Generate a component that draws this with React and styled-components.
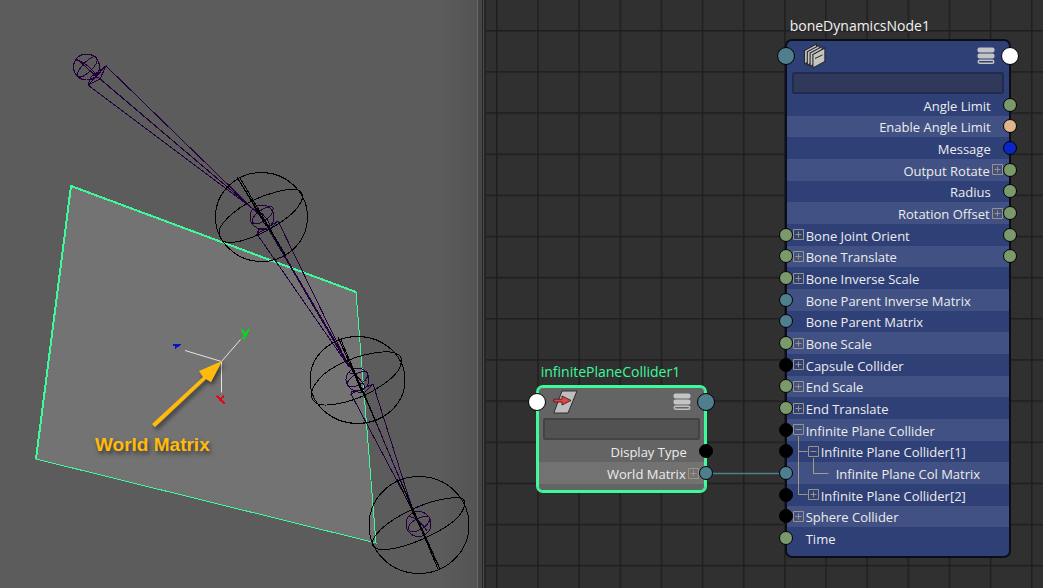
import React from 'react';
import styled, { createGlobalStyle } from 'styled-components';

const colors = {
	mint: '#3dfa9b',
	bone: '#24003f',
	amber: '#ffba0a',
	green: '#7b9a6b',
	teal: '#4f7e8e',
	black: '#000000',
	white: '#ffffff',
	blue: '#0a26c4',
	peach: '#dfb68c',
	tree: '#9a9484',
};

const GlobalStyle = createGlobalStyle`
	html, body, #root {
		height: 100%;
		margin: 0;
	}
	body {
		overflow: hidden;
		background: #303030;
		font-family: 'Open Sans', 'Noto Sans', sans-serif;
		font-size: 13px;
	}
	* {
		box-sizing: border-box;
	}
`;

const Workspace = styled.main`
	display: grid;
	grid-template-columns: 6fr 8px 7fr;
	height: 100%;
`;

const Viewport = styled.section`
	position: relative;
	overflow: hidden;
	border-right: 1px solid #6a6a6a;
	background: linear-gradient(90deg, #5c5c5c 92%, #535353 100%);
`;

const Scene = styled.svg`
	display: block;
`;

const Annotation = styled.p`
	position: absolute;
	left: 95px;
	top: 433px;
	margin: 0;
	color: ${colors.amber};
	font-family: 'Liberation Sans', Arial, sans-serif;
	font-size: 19px;
	font-weight: bold;
	line-height: 23px;
	text-shadow: 2px 3px 4px rgba(0, 0, 0, 0.5);
`;

const Splitter = styled.div`
	background: linear-gradient(
		90deg,
		#454545 4px,
		#262626 4px,
		#262626 5px,
		#4a4a4a 5px,
		#4a4a4a 6px,
		#262626 6px
	);
`;

const Editor = styled.section`
	position: relative;
	overflow: hidden;
	background: #303030;
`;

const Backdrop = styled.svg`
	display: block;
	width: 100%;
	height: 100%;
`;

const Node = styled.article`
	position: absolute;
	left: ${(props) => props.$x}px;
	top: ${(props) => props.$y}px;
	width: ${(props) => props.$width}px;
`;

const NodeTitle = styled.h2`
	margin: 0;
	padding-left: 5px;
	color: ${(props) => (props.$selected ? colors.mint : '#f2f2f2')};
	font-size: 14px;
	font-weight: normal;
	line-height: 20px;
	white-space: nowrap;
`;

const NodeBody = styled.div`
	margin-top: 3px;
	padding-bottom: 7px;
	border: 2px solid ${(props) => (props.$selected ? colors.mint : '#0b0e18')};
	border-radius: 7px;
	background: ${(props) => (props.$selected ? '#646464' : '#2f4077')};
	box-shadow: ${(props) =>
		props.$selected ? `inset 0 0 0 1px ${colors.mint}` : 'none'};
`;

const NodeHeader = styled.header`
	position: relative;
	display: flex;
	align-items: center;
	justify-content: space-between;
	height: 30px;
	padding: 0 14px 0 15px;
`;

const NameField = styled.input`
	display: block;
	width: calc(100% - 10px);
	height: 22px;
	margin: 1px 5px 0;
	padding: 0 4px;
	border: 2px solid ${(props) => (props.$selected ? '#434343' : '#202b50')};
	border-radius: 2px;
	outline: none;
	background: ${(props) => (props.$selected ? '#525252' : '#30395a')};
	color: #e6e6e6;
	font: inherit;
`;

const Attributes = styled.ul`
	display: grid;
	grid-auto-rows: 1fr;
	height: ${(props) => props.$height}px;
	margin: 0;
	padding: 0;
	list-style: none;
`;

const Attribute = styled.li`
	position: relative;
	display: flex;
	align-items: center;
	justify-content: ${(props) => (props.$output ? 'flex-end' : 'flex-start')};
	padding: 0 ${(props) => (props.$expandable ? 6 : 16)}px 0
		${(props) => 6 + props.$depth * 15}px;
	color: #ececec;
	white-space: nowrap;
	&:nth-child(even) {
		background: rgba(255, 255, 255, 0.09);
	}
`;

const Label = styled.span`
	padding: 2px 2px 0;
`;

const Spacer = styled.span`
	width: 11px;
`;

const Toggle = styled.button`
	display: flex;
	width: 11px;
	height: 11px;
	padding: 0;
	border: 0;
	background: none;
	color: ${colors.tree};
`;

const Port = styled.span`
	position: absolute;
	top: 50%;
	${(props) => props.$side}: ${(props) => (props.$large ? -10 : -8)}px;
	width: ${(props) => (props.$large ? 18 : 14)}px;
	height: ${(props) => (props.$large ? 18 : 14)}px;
	border: 1px solid #000000;
	border-radius: 50%;
	background: ${(props) => colors[props.$color]};
	transform: translateY(-50%);
`;

const Branches = styled.svg`
	position: absolute;
	left: 0;
	top: 0;
	overflow: visible;
	pointer-events: none;
`;

const ExpandIcon = ({ open }) => (
	<svg width="11" height="11" fill="none" stroke="currentColor">
		<path d={`M.5 .5h10v10h-10zM2.5 5.5h6${open ? '' : 'M5.5 2.5v6'}`} />
	</svg>
);

const StackIcon = () => (
	<svg width="24" height="26" viewBox="-1 0 24 26">
		{[0, 1, 2, 3].map((i) => (
			<path
				key={i}
				d="M1.5 7.5 13.5 1V14.5L1.5 21z"
				transform={`translate(${i * 2.8} ${i * 1.3})`}
				fill="#c6c4c0"
				stroke="#252830"
				strokeWidth="1.1"
			/>
		))}
		<path d="m12 15.500 7.500-3.600" stroke="#252830" />
	</svg>
);

const PlaneIcon = () => (
	<svg width="25" height="24" viewBox="0 0 25 24">
		<path d="M9 1h15l-9 22H.8z" fill="#bebebe" stroke="#2d2d2d" />
		<path
			d="M.8 9.2H9V6l9 4.5L9 15v-3H.8z"
			fill="#d94848"
			stroke="#5d2020"
		/>
	</svg>
);

const ModeIcon = () => (
	<svg width="18" height="18" viewBox="0 0 18 18">
		<rect x="0.5" y="0.5" width="17" height="5" rx="2" fill="#c4c4c4" />
		<rect x="0.5" y="6.5" width="17" height="5" rx="2" fill="#c4c4c4" />
		<rect
			x="1.2"
			y="13.2"
			width="15.6"
			height="3"
			rx="1.5"
			fill="none"
			stroke="#c4c4c4"
			strokeWidth="1.4"
		/>
	</svg>
);

const boneAttributes = [
	{ name: 'Angle Limit', output: 'green' },
	{ name: 'Enable Angle Limit', output: 'peach' },
	{ name: 'Message', output: 'blue' },
	{ name: 'Output Rotate', output: 'green', toggle: 'closed' },
	{ name: 'Radius', output: 'green' },
	{ name: 'Rotation Offset', output: 'green', toggle: 'closed' },
	{ name: 'Bone Joint Orient', input: 'green', output: 'green', toggle: 'closed' },
	{ name: 'Bone Translate', input: 'green', output: 'green', toggle: 'closed' },
	{ name: 'Bone Inverse Scale', input: 'green', toggle: 'closed' },
	{ name: 'Bone Parent Inverse Matrix', input: 'teal' },
	{ name: 'Bone Parent Matrix', input: 'teal' },
	{ name: 'Bone Scale', input: 'green', toggle: 'closed' },
	{ name: 'Capsule Collider', input: 'black', toggle: 'closed' },
	{ name: 'End Scale', input: 'green', toggle: 'closed' },
	{ name: 'End Translate', input: 'green', toggle: 'closed' },
	{ name: 'Infinite Plane Collider', input: 'black', toggle: 'open', branch: 'M11.5 17v58.500h9M11.5 32.5h9' },
	{ name: 'Infinite Plane Collider[1]', input: 'black', toggle: 'open', depth: 1, branch: 'M26.5 17v15.5h15' },
	{ name: 'Infinite Plane Col Matrix', input: 'teal', depth: 2 },
	{ name: 'Infinite Plane Collider[2]', input: 'black', toggle: 'closed', depth: 1 },
	{ name: 'Sphere Collider', input: 'black', toggle: 'closed' },
	{ name: 'Time', input: 'green' },
];

const planeAttributes = [
	{ name: 'Display Type', output: 'black' },
	{ name: 'World Matrix', output: 'teal', toggle: 'closed' },
];

const AttributeRow = ({ name, input, output, toggle, branch, depth = 0 }) => {
	const alignEnd = !input;
	const button = toggle && (
		<Toggle type="button" aria-label={`Toggle ${name}`}>
			<ExpandIcon open={toggle === 'open'} />
		</Toggle>
	);

	return (
		<Attribute $output={alignEnd} $expandable={Boolean(toggle)} $depth={depth}>
			{input && <Port $side="left" $color={input} />}
			{!alignEnd && (button || <Spacer />)}
			<Label>{name}</Label>
			{alignEnd && button}
			{output && <Port $side="right" $color={output} />}
			{branch && (
				<Branches width="1" height="1" fill="none" stroke={colors.tree}>
					<path d={branch} />
				</Branches>
			)}
		</Attribute>
	);
};

const GraphNode = ({ title, x, y, width, height, icon, input, output, attributes, selected }) => (
	<Node $x={x} $y={y} $width={width}>
		<NodeTitle $selected={selected}>{title}</NodeTitle>
		<NodeBody $selected={selected}>
			<NodeHeader>
				<Port $large $side="left" $color={input} />
				{icon}
				<ModeIcon />
				<Port $large $side="right" $color={output} />
			</NodeHeader>
			<NameField $selected={selected} aria-label={`${title} filter`} />
			<Attributes $height={height}>
				{attributes.map((attribute) => (
					<AttributeRow key={attribute.name} {...attribute} />
				))}
			</Attributes>
		</NodeBody>
	</Node>
);

const GridLines = () => (
	<Backdrop aria-hidden="true">
		<defs>
			<pattern
				id="grid"
				x="10"
				y="30"
				width="41.15"
				height="41.15"
				patternUnits="userSpaceOnUse"
			>
				<path d="M0 .8h42M.8 0v42" stroke="#1e1e1e" strokeWidth="1.5" />
			</pattern>
		</defs>
		<rect width="100%" height="100%" fill="url(#grid)" />
		<path d="M220 473.5h80" stroke={colors.teal} strokeWidth="1.5" />
	</Backdrop>
);

const BoneScene = () => (
	<Scene width="479" height="588" fill="none" aria-hidden="true">
		<defs>
			<filter id="shadow" x="-30%" y="-30%" width="170%" height="170%">
				<feDropShadow dx="2" dy="3" stdDeviation="2" floodOpacity="0.5" />
			</filter>
		</defs>
		<path d="M71 186 356 292 376 543 36 459z" fill="#737373" />
		<g stroke={colors.mint} shapeRendering="crispEdges">
			<path d="M36 459 71 186 356 292" strokeWidth="2" />
			<path d="M356 292 376 543 36 459" />
		</g>
		<g stroke={colors.bone} shapeRendering="crispEdges">
			<circle cx="86.5" cy="67" r="13" />
			<path d="M76 58 98 78M77 76c1-9 17-24 20-18 2 7-15 23-20 18M76 61c4-3 20 10 21 17" />
			<path d="M106 66 88 85 91 77 106 66 100 79 88 85M106 66 252 208M100 79 252 208M88 85 252 208M98 77 252 208" />
			<path d="M252 208 262 217" />
			<circle cx="262" cy="217" r="12" />
			<path d="M252 222c0-9 19-19 21-14 1 9-16 20-21 14M253 210c6-2 16 10 17 16" />
			<path d="M257 234 278 221 269 230 259 229zM257 234 349 367M278 221 349 367M269 230 349 367M262 217 358 380" />
			<circle cx="357.5" cy="379.5" r="11.5" />
			<path d="M347 384c2-8 19-17 21-10-1 9-17 17-21 10M349 373c6-1 14 9 16 14" />
			<path d="M351 394 373 384 364 393 352 391zM351 394 413 511M373 384 413 511M364 393 413 511M358 380 419 524" />
			<circle cx="418.5" cy="524" r="12.5" />
			<path d="M408 529c1-9 19-16 22-11-1 9-17 18-22 11M409 517c5-1 15 8 18 14" />
		</g>
		<g stroke="#000000" shapeRendering="crispEdges">
			<ellipse cx="261.5" cy="217" rx="46" ry="44.5" />
			<path d="M303 197C299 210 287 219 270 229 248 241 229 245 223 241 214 233 220 222 241 207 263 193 294 186 300 191Q303 194 303 197" />
			<path d="M237 177 286 256M240 178 286 256M237 177 266 226" />
			<ellipse cx="357.5" cy="380" rx="47.5" ry="43.5" />
			<path d="M401 358C403 370 392 380 371 392 347 405 320 408 315 402 306 395 315 377 338 365 361 353 389 349 397 354Q401 356 401 358" />
			<path d="M338 337 376 422M341 340 376 422M338 337 362 392" />
			<ellipse cx="419" cy="525" rx="50" ry="48.5" />
			<path d="M465 504C462 518 447 528 423 539 400 549 378 553 373 546 369 538 385 522 411 510 435 498 459 496 463 499Q465 501 465 504" />
			<path d="M397 479 440 569M400 480 440 569M419 524 438 569" />
		</g>
		<path
			d="M221.5 361.5v31M221.5 361.5l19-22M221.5 361.5 185 350.5"
			stroke="#e5e5e5"
		/>
		<g shapeRendering="crispEdges">
			<path d="m242 329 3 7m4-7-5 9h-2" stroke="#00df15" strokeWidth="2" />
			<path d="M173 345h6l-4 3" stroke="#0515c8" strokeWidth="2" />
			<path d="m217 396 8 8m-1-8-5 4" stroke="#e30613" strokeWidth="2" />
		</g>
		<path
			d="m152 424 51-47-4-6 23-10-11 21-5-3-51 48z"
			fill={colors.amber}
			filter="url(#shadow)"
		/>
	</Scene>
);

const App = () => (
	<>
		<GlobalStyle />
		<Workspace>
			<Viewport aria-label="Viewport">
				<BoneScene />
				<Annotation>World Matrix</Annotation>
			</Viewport>
			<Splitter />
			<Editor aria-label="Node editor">
				<GridLines />
				<GraphNode
					title="infinitePlaneCollider1"
					x={50}
					y={362}
					width={171}
					height={44}
					icon={<PlaneIcon />}
					input="white"
					output="teal"
					attributes={planeAttributes}
					selected
				/>
				<GraphNode
					title="boneDynamicsNode1"
					x={299}
					y={16}
					width={226}
					height={455}
					icon={<StackIcon />}
					input="teal"
					output="white"
					attributes={boneAttributes}
				/>
			</Editor>
		</Workspace>
	</>
);

export default App;
